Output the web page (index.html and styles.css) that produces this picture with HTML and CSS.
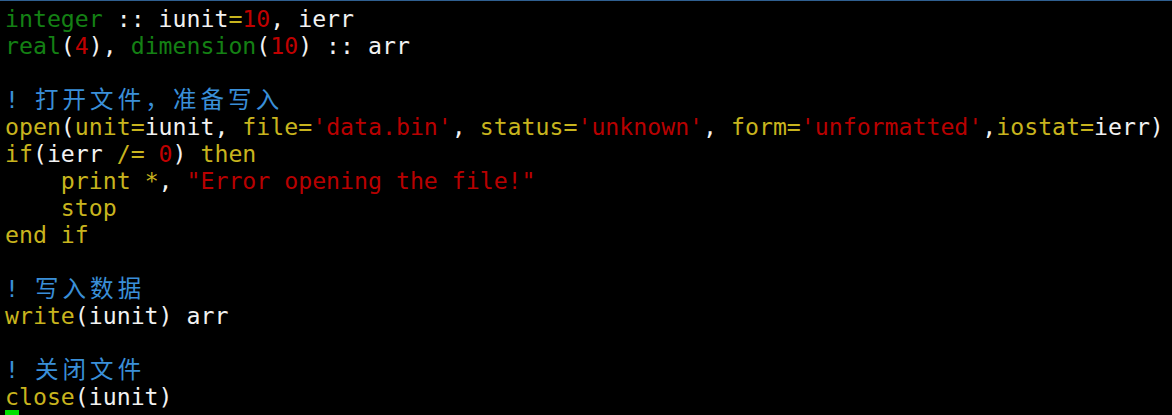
FILE: index.html
```html
<!DOCTYPE html>
<html>
<head>
<meta charset="utf-8">
<link rel="stylesheet" href="styles.css">
</head>
<body>
<div class="term">
<div class="code">
<div class="ln"><span class="ty">integer</span> :: iunit<span class="kw">=</span><span class="num">10</span>, ierr</div>
<div class="ln"><span class="ty">real</span>(<span class="num">4</span>), <span class="ty">dimension</span>(<span class="num">10</span>) :: arr</div>
<div class="ln"></div>
<div class="ln"><span class="cm">! <span class="cjk">打开文件，准备写入</span></span></div>
<div class="ln"><span class="kw">open</span>(<span class="kw">unit=</span>iunit, <span class="kw">file=</span><span class="str">'data.bin'</span>, <span class="kw">status=</span><span class="str">'unknown'</span>, <span class="kw">form=</span><span class="str">'unformatted'</span>,<span class="kw">iostat=</span>ierr)</div>
<div class="ln"><span class="kw">if</span>(ierr <span class="kw">/=</span> <span class="num">0</span>) <span class="kw">then</span></div>
<div class="ln">    <span class="kw">print</span> <span class="kw">*</span>, <span class="str">"Error opening the file!"</span></div>
<div class="ln">    <span class="kw">stop</span></div>
<div class="ln"><span class="kw">end if</span></div>
<div class="ln"></div>
<div class="ln"><span class="cm">! <span class="cjk">写入数据</span></span></div>
<div class="ln"><span class="kw">write</span>(iunit) arr</div>
<div class="ln"></div>
<div class="ln"><span class="cm">! <span class="cjk">关闭文件</span></span></div>
<div class="ln"><span class="kw">close</span>(iunit)</div>
<div class="ln"><span class="cursor"></span></div>
</div>
</div>
</body>
</html>
```

FILE: styles.css
```css
html, body {
  margin: 0;
  padding: 0;
  background: #000;
}
.term {
  width: 1172px;
  height: 415px;
  overflow: hidden;
  background: #000;
  border-top: 1px solid #2f5f90;
  box-sizing: border-box;
  padding: 4px 0 0 5px;
}
.code {
  font-family: "DejaVu Sans Mono", monospace;
  font-size: 23.2px;
  color: #f2f2f2;
}
.ln {
  height: 27px;
  line-height: 27px;
  white-space: pre;
  overflow: visible;
}
.ty { color: #148014; }
.kw { color: #c8b41e; }
.num { color: #c00000; }
.str { color: #b80000; }
.cm { color: #3a8fd8; }
.cjk {
  font-family: "Noto Sans CJK SC", sans-serif;
  font-size: 23.5px;
  line-height: 20px;
  letter-spacing: 4.1px;
  margin-left: 2px;
}
.cursor {
  display: inline-block;
  width: 13.8px;
  height: 27px;
  vertical-align: top;
  background: #00e000;
}
```
